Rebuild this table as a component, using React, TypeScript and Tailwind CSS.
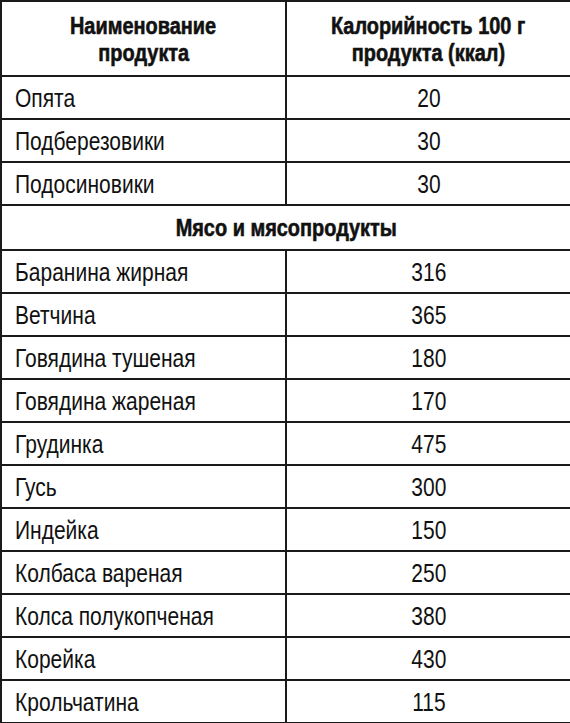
const rowsTop = [
  { name: 'Опята', kcal: '20' },
  { name: 'Подберезовики', kcal: '30' },
  { name: 'Подосиновики', kcal: '30' },
];

const rowsMeat = [
  { name: 'Баранина жирная', kcal: '316' },
  { name: 'Ветчина', kcal: '365' },
  { name: 'Говядина тушеная', kcal: '180' },
  { name: 'Говядина жареная', kcal: '170' },
  { name: 'Грудинка', kcal: '475' },
  { name: 'Гусь', kcal: '300' },
  { name: 'Индейка', kcal: '150' },
  { name: 'Колбаса вареная', kcal: '250' },
  { name: 'Колса полукопченая', kcal: '380' },
  { name: 'Корейка', kcal: '430' },
  { name: 'Крольчатина', kcal: '115' },
];

// narrow look: Liberation Sans squeezed horizontally
function Narrow({ children, origin = 'left' }: { children: React.ReactNode; origin?: 'left' | 'center' }) {
  return (
    <span className={`inline-block whitespace-nowrap scale-x-[0.84] ${origin === 'left' ? 'origin-left' : 'origin-center'}`}>
      {children}
    </span>
  );
}

function Bold({ children }: { children: React.ReactNode }) {
  return (
    <span className="inline-block whitespace-nowrap font-bold scale-x-[0.83] origin-center [-webkit-text-stroke:0.6px_#111]">
      {children}
    </span>
  );
}

function Row({ name, kcal }: { name: string; kcal: string }) {
  return (
    <tr className="h-[43px]">
      <td className="border-2 border-[#1a1a1a] pl-[13px] pt-[1px] text-left">
        <Narrow>{name}</Narrow>
      </td>
      <td className="border-2 border-[#1a1a1a] pt-[1px] text-center">
        <Narrow origin="center">{kcal}</Narrow>
      </td>
    </tr>
  );
}

export default function App() {
  return (
    <div className="w-[570px] h-[723px] bg-white overflow-hidden">
      <table
        className="w-[570px] border-collapse table-fixed text-[25px] leading-none text-[#111]"
        style={{ fontFamily: '"Liberation Sans", Arial, sans-serif' }}
      >
        <colgroup>
          <col className="w-[285px]" />
          <col className="w-[285px]" />
        </colgroup>
        <thead>
          <tr className="h-[75px]">
            <th className="border-2 border-[#1a1a1a] text-center text-[24px] leading-[27px] pt-[1px]">
              <Bold>Наименование</Bold>
              <br />
              <Bold>продукта</Bold>
            </th>
            <th className="border-2 border-[#1a1a1a] text-center text-[24px] leading-[27px] pt-[1px]">
              <Bold>Калорийность 100 г</Bold>
              <br />
              <Bold>продукта (ккал)</Bold>
            </th>
          </tr>
        </thead>
        <tbody>
          {rowsTop.map((r) => (
            <Row key={r.name} {...r} />
          ))}
          <tr className="h-[45px]">
            <td colSpan={2} className="border-2 border-[#1a1a1a] text-center text-[24px] pt-[1px]">
              <Bold>Мясо и мясопродукты</Bold>
            </td>
          </tr>
          {rowsMeat.map((r) => (
            <Row key={r.name} {...r} />
          ))}
        </tbody>
      </table>
    </div>
  );
}
